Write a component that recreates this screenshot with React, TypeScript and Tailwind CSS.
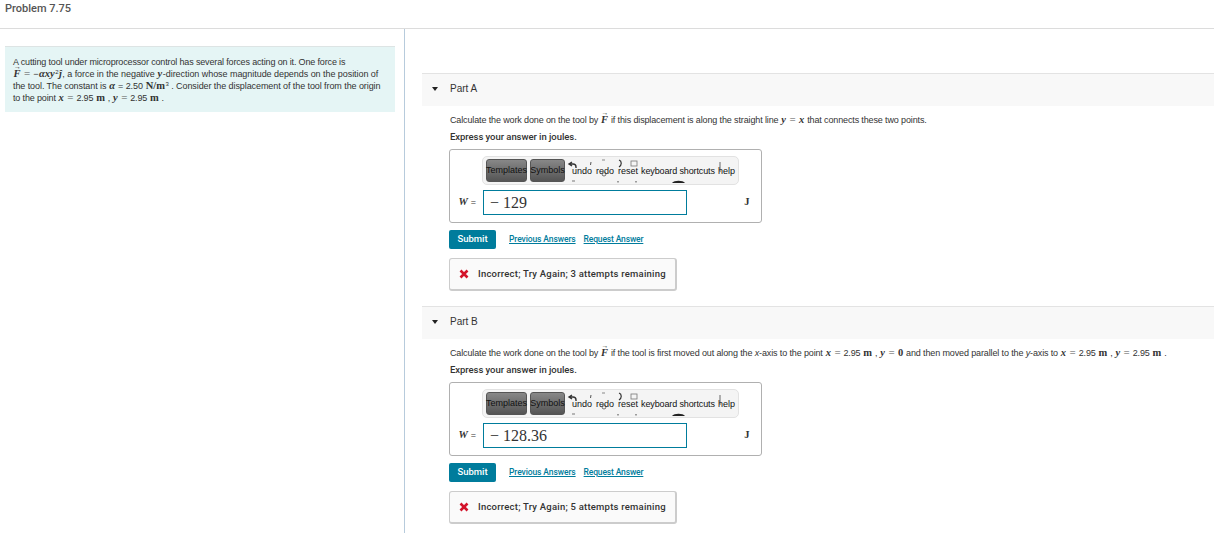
const sans = { fontFamily: '"Liberation Sans", Arial, sans-serif' };

function M({ children }: { children: React.ReactNode }) {
  return <span className="px-[0.5px] font-['Liberation_Serif',serif] text-[10.5px] font-bold italic leading-[10px] tracking-normal text-[#333]">{children}</span>;
}

function U({ children }: { children: React.ReactNode }) {
  return <span className="px-[0.5px] font-['Liberation_Serif',serif] text-[10.5px] font-bold leading-[10px] tracking-normal text-[#333]">{children}</span>;
}

function Eq() {
  return <span className="mx-[3px] font-['Liberation_Serif',serif] text-[11px] leading-[10px] text-[#555]">=</span>;
}

function FVec() {
  return (
    <span className="relative inline-block leading-[10px]">
      <span className="absolute -top-[5px] left-[1px] font-['Liberation_Serif',serif] text-[7px] leading-none text-[#333]">→</span>
      <M>F</M>
    </span>
  );
}

function Toolbar() {
  return (
    <div className="relative ml-[32px] flex h-[29px] w-[257px] items-center whitespace-nowrap rounded-[5px] border border-[#e2e2e2] bg-[#f4f4f4] pl-[3px] text-[9px] text-[#111]">
      <div className="flex h-[23px] w-[41px] items-center justify-center rounded-[3px] border border-[#555] bg-gradient-to-b from-[#888] to-[#555] pt-[1px]">Templates</div>
      <div className="ml-[3px] flex h-[23px] w-[35px] items-center justify-center rounded-[3px] border border-[#555] bg-gradient-to-b from-[#888] to-[#555] pt-[1px]">Symbols</div>
      <span className="ml-[7px] mt-[2px] w-[18px]">undo</span>
      <span className="ml-[6px] mt-[2px] w-[17px]">redo</span>
      <span className="ml-[5px] mt-[2px] w-[19px]">reset</span>
      <span className="ml-[4px] mt-[2px] w-[73px] tracking-[-0.12px]">keyboard shortcuts</span>
      <span className="ml-[4px] mt-[2px]">help</span>
      <svg className="absolute left-0 top-0 overflow-visible" width="257" height="29" viewBox="0 0 257 29" fill="none">
        <path d="M89 5l-3 2 3 2M87 7h3c2 0 3 1 3 3v1" stroke="#333" strokeWidth="1.4" />
        <path d="M108 5l-.5 3" stroke="#555" />
        <path d="M119 3h3" stroke="#888" />
        <circle cx="121" cy="17" r="2" stroke="#555" strokeWidth="0.8" />
        <path d="M136 3c3 1 3 5 0 7" stroke="#333" strokeWidth="1.2" />
        <rect x="148" y="4" width="6" height="5" stroke="#777" strokeWidth="0.8" />
        <path d="M89 24h3" stroke="#777" />
        <path d="M135 24v1.5M153 24v1.5" stroke="#444" />
        <path d="M189 26c2-3 11-3 13 0z" fill="#222" />
        <path d="M237 5v10" stroke="#444" strokeWidth="0.8" />
      </svg>
    </div>
  );
}

function AnswerBox({ value }: { value: string }) {
  return (
    <div className="mt-[4px] h-[74px] w-[313px] rounded-[3px] border border-[#b0b0b0] pt-[6px]">
      <Toolbar />
      <div className="mt-[5px] flex items-center">
        <span className="ml-[8px] w-[25px] text-[9px] text-[#333]">
          <M>W</M> =
        </span>
        <div className="flex h-[25px] w-[204px] items-center border border-[#007c9c] pl-[6px] font-['Liberation_Serif',serif] text-[16px] text-[#333]">
          {value}
        </div>
        <span className="ml-auto mr-[11px] text-[9px]">
          <U>J</U>
        </span>
      </div>
    </div>
  );
}

function Feedback({ attempts }: { attempts: number }) {
  return (
    <div className="mt-[9px] flex h-[33px] w-[228px] items-center whitespace-nowrap rounded-[3px] border border-b-2 border-r-2 border-[#ccc] bg-[#fafafa] pl-[9px] font-['Roboto',sans-serif] text-[9.5px] font-medium tracking-[0.22px] text-[#333]">
      <svg width="10" height="10" viewBox="0 0 10 10" className="mr-[9px]">
        <path d="M1.5 1.5l7 7M8.5 1.5l-7 7" stroke="#d3132a" strokeWidth="2.6" />
      </svg>
      Incorrect; Try Again; {attempts} attempts remaining
    </div>
  );
}

function Part({ name, children, value, attempts, top }: { name: string; children: React.ReactNode; value: string; attempts: number; top: string }) {
  return (
    <section className={top}>
      <div className="flex h-[33px] items-center border-t border-[#e3e3e3] bg-[#f8f8f8] pb-[3px] text-[10px] text-[#333]">
        <span className="ml-[10px] h-0 w-0 border-x-[3.5px] border-t-[4px] border-x-transparent border-t-[#222]" />
        <span className="ml-[12px]">{name}</span>
      </div>
      <div className="pl-[27px]">
        <p className="mt-[6px] h-[16px] whitespace-nowrap pl-[1px] text-[9px] leading-[17px] tracking-[-0.13px] text-[#333]">{children}</p>
        <p className="pl-[1px] font-['Roboto',sans-serif] text-[9.5px] font-medium leading-[17px] tracking-[-0.05px] text-[#333]">Express your answer in joules.</p>
        <AnswerBox value={value} />
        <div className="mt-[7px] flex items-center font-['Roboto',sans-serif]">
          <span className="flex h-[19px] w-[47px] items-center justify-center rounded-[2px] bg-[#007c9c] text-[9.5px] font-medium text-white">Submit</span>
          <span className="ml-[13px] text-[8.5px] font-medium tracking-[-0.1px] text-[#007c9c] underline">Previous Answers</span>
          <span className="ml-[8px] text-[8.5px] font-medium tracking-[-0.15px] text-[#007c9c] underline">Request Answer</span>
        </div>
        <Feedback attempts={attempts} />
      </div>
    </section>
  );
}

export default function App() {
  return (
    <div className="h-[533px] w-[1214px] overflow-hidden bg-white" style={sans}>
      <header className="flex h-[29px] items-start border-b border-[#dcdcdc] pl-[5px] pt-[2px] font-['Roboto',sans-serif] text-[11px] font-medium leading-[14px] text-[#555]">
        Problem 7.75
      </header>
      <div className="flex h-[504px]">
        <aside className="h-full w-[405px] border-r border-[#b7cbdc] pl-[5px] pt-[17px]">
          <div className="h-[66px] w-[390px] whitespace-nowrap border-t border-[#dde4e4] bg-[#e5f5f5] pl-[8px] pt-[9px] text-[9px] leading-[12px] tracking-[-0.15px] text-[#333]">
            <div className="h-[12px]">A cutting tool under microprocessor control has several forces acting on it. One force is</div>
            <div className="h-[12px] tracking-[-0.05px]">
              <FVec /><Eq />−<span className="tracking-[0.5px]"><M>αxy</M></span>
              <sup className="text-[6px] leading-none">2</sup>
              <M>ĵ</M>, a force in the negative <M>y</M>-direction whose magnitude depends on the position of
            </div>
            <div className="h-[12px] tracking-[-0.08px]">
              the tool. The constant is <M>α</M> = 2.50 <U>N/m</U>
              <sup className="text-[6px] leading-none">3</sup> . Consider the displacement of the tool from the origin
            </div>
            <div className="h-[12px]">
              to the point <M>x</M><Eq />2.95 <U>m</U> , <M>y</M><Eq />2.95 <U>m</U> .
            </div>
          </div>
        </aside>
        <main className="flex-1 pl-[17px] pt-[44px]">
          <Part name="Part A" value="− 129" attempts={3} top="">
            Calculate the work done on the tool by <FVec /> if this displacement is along the straight line <M>y</M><Eq /><M>x</M> that connects these two points.
          </Part>
          <Part name="Part B" value="− 128.36" attempts={5} top="mt-[15px]">
            Calculate the work done on the tool by <FVec /> if the tool is first moved out along the <i>x</i>-axis to the point <M>x</M><Eq />2.95 <U>m</U> , <M>y</M><Eq /><U>0</U> and then moved parallel to the <i>y</i>-axis to <M>x</M><Eq />2.95 <U>m</U> , <M>y</M><Eq />2.95 <U>m</U> .
          </Part>
        </main>
      </div>
    </div>
  );
}
